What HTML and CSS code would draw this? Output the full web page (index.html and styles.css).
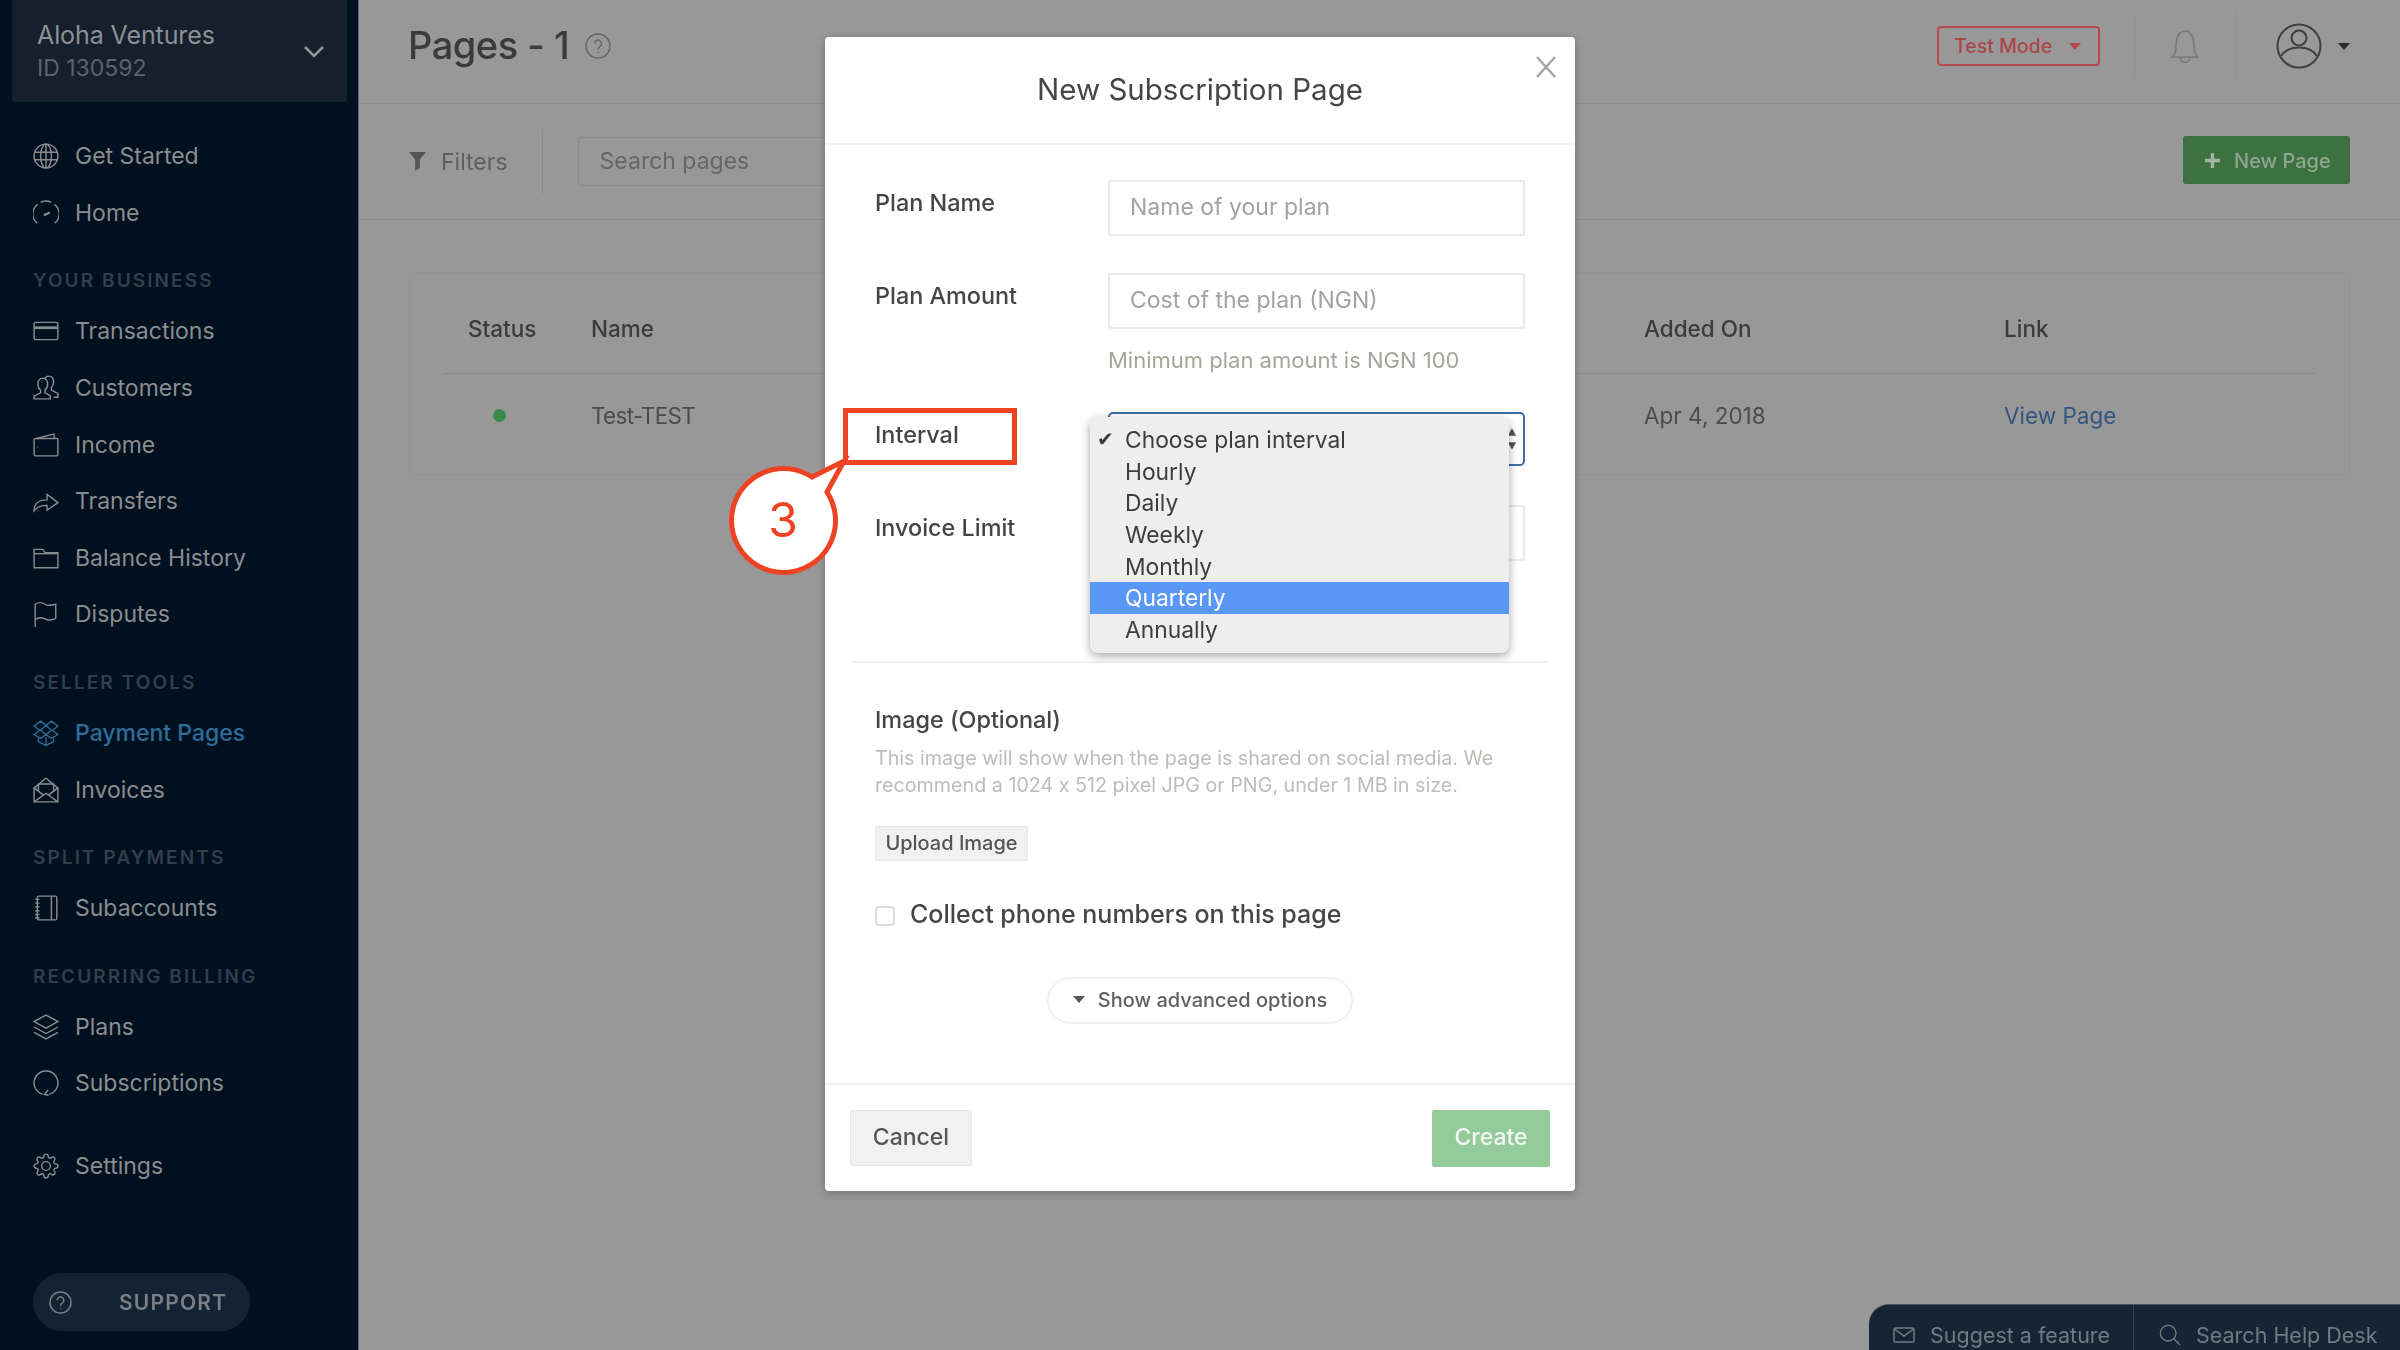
FILE: index.html
```html
<!DOCTYPE html>
<html lang="en">
<head>
<meta charset="utf-8">
<title>New Subscription Page</title>
<link rel="stylesheet" href="styles.css">
</head>
<body>
<div class="app">
  <aside class="sidebar">
    <div class="account">
      <div class="account-text">
        <div class="account-name">Aloha Ventures</div>
        <div class="account-id">ID 130592</div>
      </div>
      <svg class="account-chevron" viewBox="0 0 22 14"><path d="M2 3l9 9 9-9"/></svg>
    </div>
    <nav class="nav">
      <a class="nav-item"><svg class="ico" viewBox="0 0 24 24"><circle cx="12" cy="12" r="11"/><ellipse cx="12" cy="12" rx="5" ry="11"/><path d="M12 1v22M1.600 8.500h20.800M1.600 15.500h20.800"/></svg><span>Get Started</span></a>
      <a class="nav-item"><svg class="ico" viewBox="0 0 24 24"><path d="M4 21.500A11 11 0 0 1 4.300 4M7 2.200a11 11 0 0 1 10 0M19.700 4a11 11 0 0 1 .3 17.500"/><path class="mid" d="M10 14l5.500-2.500"/></svg><span>Home</span></a>
      <div class="nav-label">YOUR BUSINESS</div>
      <a class="nav-item"><svg class="ico" viewBox="0 0 24 24"><rect x="1" y="4" width="22" height="16" rx="1.500"/><path class="thick" d="M1 9h22"/></svg><span>Transactions</span></a>
      <a class="nav-item"><svg class="ico" viewBox="0 0 24 24"><path d="M1 22v-2.500l6-3v-2.500c-2-1.500-2.500-3.500-2.500-6 0-3 2-5 4.500-5s4.500 2 4.500 5c0 2.500-.5 4.500-2.500 6v2.500l5 2.500v3z"/><path d="M11 3c1-1.500 2.500-2 3.500-2 3 0 4.500 2 4.500 5 0 2.500-.5 4-2 5.500v2.500l6 3v3.500h-4"/></svg><span>Customers</span></a>
      <a class="nav-item"><svg class="ico" viewBox="0 0 24 24"><path d="M3 6l16-4 1 4"/><rect x="1" y="6" width="22" height="16" rx="1.500"/><path d="M4 14h.5"/></svg><span>Income</span></a>
      <a class="nav-item"><svg class="ico" viewBox="0 0 24 24"><path d="M1 21c0-6 4-10 12-10V6l10 7.500-10 7V16c-5 0-9 1-12 5z"/></svg><span>Transfers</span></a>
      <a class="nav-item"><svg class="ico" viewBox="0 0 24 24"><path d="M1 21V4h8l2 3h12v14z"/><path d="M1 8h22"/></svg><span>Balance History</span></a>
      <a class="nav-item"><svg class="ico" viewBox="0 0 24 24"><path d="M2 24V3c3-2 6-2 9 0s6 1 10 0v13c-4 2-7 2-10 .5S5 15 2 17"/></svg><span>Disputes</span></a>
      <div class="nav-label">SELLER TOOLS</div>
      <a class="nav-item is-active"><svg class="ico" viewBox="0 0 24 24"><path d="M7 1l5 4 5-4 6 4.500-5 4 5 4-6 3.500-5-3.500-5 3.500-6-3.500 5-4-5-4zM7 9.500l5-4.500 5 4.500-5 4z"/><path d="M5 17v3l7 3.500 7-3.500v-3M12 16v7.500"/></svg><span>Payment Pages</span></a>
      <a class="nav-item"><svg class="ico" viewBox="0 0 24 24"><path d="M1 10l4-3 7-6 7 6 4 3v13H1z"/><path d="M5 13V6.500h14V13M1 10l9 7M23 10l-9 7M1 23l11-8 11 8"/></svg><span>Invoices</span></a>
      <div class="nav-label">SPLIT PAYMENTS</div>
      <a class="nav-item"><svg class="ico" viewBox="0 0 24 24"><rect x="4" y="1" width="18" height="22" rx="1.500"/><path d="M17 1v22M2 4h4M2 7.500h4M2 11h4M2 14.500h4M2 18h4M2 21h4"/></svg><span>Subaccounts</span></a>
      <div class="nav-label">RECURRING BILLING</div>
      <a class="nav-item"><svg class="ico" viewBox="0 0 24 24"><path d="M12 1l11 6-11 6L1 7z"/><path d="M1 12l11 6 11-6M1 17l11 6 11-6"/></svg><span>Plans</span></a>
      <a class="nav-item"><svg class="ico" viewBox="0 0 24 24"><path d="M9 22.500A11 11 0 1 1 15 22.500"/><path d="M14 18.500l-3.500 4 4 1"/></svg><span>Subscriptions</span></a>
      <a class="nav-item nav-settings"><svg class="ico" viewBox="0 0 24 24"><circle cx="12" cy="12" r="4"/><path d="M19.400 15a1.650 1.650 0 0 0 .33 1.820l.06.06a2 2 0 0 1 0 2.830 2 2 0 0 1-2.830 0l-.06-.06a1.650 1.650 0 0 0-1.820-.33 1.650 1.650 0 0 0-1 1.510V21a2 2 0 0 1-2 2 2 2 0 0 1-2-2v-.09A1.650 1.650 0 0 0 9 19.400a1.650 1.650 0 0 0-1.820.33l-.06.06a2 2 0 0 1-2.830 0 2 2 0 0 1 0-2.830l.06-.06a1.650 1.650 0 0 0 .33-1.820 1.650 1.650 0 0 0-1.510-1H3a2 2 0 0 1-2-2 2 2 0 0 1 2-2h.09A1.650 1.650 0 0 0 4.600 9a1.650 1.650 0 0 0-.33-1.820l-.06-.06a2 2 0 0 1 0-2.830 2 2 0 0 1 2.830 0l.06.06a1.650 1.650 0 0 0 1.820.33H9a1.650 1.650 0 0 0 1-1.510V3a2 2 0 0 1 2-2 2 2 0 0 1 2 2v.09a1.650 1.650 0 0 0 1 1.510 1.650 1.650 0 0 0 1.820-.33l.06-.06a2 2 0 0 1 2.830 0 2 2 0 0 1 0 2.830l-.06.06a1.650 1.650 0 0 0-.33 1.820V9a1.650 1.650 0 0 0 1.510 1H21a2 2 0 0 1 2 2 2 2 0 0 1-2 2h-.09a1.650 1.650 0 0 0-1.510 1z"/></svg><span>Settings</span></a>
    </nav>
    <div class="support">
      <svg class="support-ico" viewBox="0 0 24 24"><circle cx="12" cy="12" r="11"/><path d="M8.500 9.500a3.500 3.500 0 1 1 5.500 3c-1.500 1-2 1.500-2 3"/><path d="M12 18v1"/></svg>
      <span>SUPPORT</span>
    </div>
  </aside>

  <main class="main">
    <header class="topbar">
      <div class="page-title">
        <h1>Pages - 1</h1>
        <svg class="help-ico" viewBox="0 0 26 26"><circle cx="13" cy="13" r="12"/><path d="M9.500 10.500a3.500 3.500 0 1 1 5.500 3c-1.500 1-2 1.500-2 3"/><path d="M13 19v1"/></svg>
      </div>
      <div class="top-actions">
        <div class="test-mode"><span>Test Mode</span><i class="caret caret-red"></i></div>
        <div class="bell-cell">
          <svg class="bell" viewBox="0 0 30 36"><path d="M2 29c3-3 4-5 4-12 0-7 3-14 9-14s9 7 9 14c0 7 1 9 4 12z"/><path d="M10 29.500a5 5 0 0 0 10 0"/></svg>
        </div>
        <div class="user-cell">
          <svg class="avatar" viewBox="0 0 46 46"><circle cx="23" cy="23" r="21.500"/><circle cx="23" cy="15" r="7.500"/><path d="M5 33c4-6 11-8.500 18-8.500s14 2.500 18 8.500"/></svg>
          <i class="caret caret-dark"></i>
        </div>
      </div>
    </header>

    <section class="toolbar">
      <div class="filters">
        <svg class="filter-ico" viewBox="0 0 18 20"><path d="M0 0h18l-6.500 8v9l-5 3V8z"/></svg>
        <span>Filters</span>
      </div>
      <div class="search">Search pages</div>
      <div class="new-page">
        <svg class="plus" viewBox="0 0 16 16"><path d="M8 0v16M0 8h16"/></svg>
        <span>New Page</span>
      </div>
    </section>

    <section class="content">
      <div class="card">
        <div class="table-row table-head">
          <div class="cell-status">Status</div><div>Name</div><div>Added On</div><div>Link</div>
        </div>
        <div class="table-row table-body">
          <div class="cell-status"><i class="dot"></i></div><div class="cell-name">Test-TEST</div><div>Apr 4, 2018</div><div class="link">View Page</div>
        </div>
      </div>
    </section>

    <div class="helpbar">
      <div class="help-cell help-suggest">
        <svg class="help-bar-ico mail" viewBox="0 0 22 16"><rect x="1" y="1" width="20" height="14" rx="1.500"/><path d="M1.500 2l9.500 7 9.500-7"/></svg>
        <span>Suggest a feature</span>
      </div>
      <div class="help-cell help-search">
        <svg class="help-bar-ico lens" viewBox="0 0 24 24"><circle cx="10" cy="10" r="8.500"/><path d="M16 16l7 7"/></svg>
        <span>Search Help Desk</span>
      </div>
    </div>
  </main>
</div>

<div class="modal">
  <div class="modal-head">
    <h2>New Subscription Page</h2>
    <svg class="close" viewBox="0 0 20 22"><path d="M1 1l18 20M19 1L1 21"/></svg>
  </div>
  <div class="modal-body">
    <div class="field">
      <label class="field-label">Plan Name</label>
      <input class="input" placeholder="Name of your plan">
    </div>
    <div class="field field-tight">
      <label class="field-label">Plan Amount</label>
      <input class="input" placeholder="Cost of the plan (NGN)">
    </div>
    <div class="hint">Minimum plan amount is NGN 100</div>
    <div class="field field-select">
      <label class="field-label">Interval</label>
      <div class="select"><svg class="select-arrows" viewBox="0 0 12 26"><path d="M6 0l5 9H1zM6 26l-5-9h10z"/></svg></div>
    </div>
    <div class="field">
      <label class="field-label">Invoice Limit</label>
      <input class="input">
    </div>
    <div class="divider"></div>
    <div class="image-title">Image (Optional)</div>
    <p class="image-desc">This image will show when the page is shared on social media. We<br>recommend a 1024 x 512 pixel JPG or PNG, under 1 MB in size.</p>
    <div class="upload">Upload Image</div>
    <label class="phone"><i class="checkbox"></i><span>Collect phone numbers on this page</span></label>
    <div class="advanced"><i class="caret caret-small"></i><span>Show advanced options</span></div>
  </div>
  <div class="modal-foot">
    <div class="btn-cancel">Cancel</div>
    <div class="btn-create">Create</div>
  </div>
</div>

<ul class="dropdown">
  <li class="is-checked">Choose plan interval</li>
  <li>Hourly</li>
  <li>Daily</li>
  <li>Weekly</li>
  <li>Monthly</li>
  <li class="is-hover">Quarterly</li>
  <li>Annually</li>
</ul>

<div class="callout-box"></div>
<svg class="callout" viewBox="0 0 125 172">
  <path d="M87 72L119 56 102 87A52 52 0 1 1 87 72Z"/>
  <text x="58" y="132">3</text>
</svg>
</body>
</html>
```
FILE: styles.css
```css
* { box-sizing: border-box; }
html, body { margin: 0; height: 100%; }
body {
  width: 2400px;
  height: 1350px;
  overflow: hidden;
  position: relative;
  background: #989898;
  font-family: Inter, "Liberation Sans", sans-serif;
  font-feature-settings: "calt" 0;
  filter: blur(.5px);
}
.app { display: flex; height: 1350px; }

/* Sidebar */
.sidebar {
  width: 359px;
  flex: none;
  display: flex;
  flex-direction: column;
  background: #01101f;
  border-right: 1px solid #5a6672;
}
.account {
  margin: 0 11px 0 12px;
  height: 102px;
  background: #161f2c;
  border-radius: 0 0 4px 4px;
  display: flex;
  align-items: center;
  justify-content: space-between;
  padding: 0 22px 0 25px;
}
.account-text { margin-top: -2px; }
.account-name { font-size: 25px; line-height: 34px; color: #8b9096; margin-bottom: 1px; letter-spacing: -.1px; }
.account-id { font-size: 23px; line-height: 30px; color: #5b626b; }
.account-chevron { width: 22px; height: 14px; fill: none; stroke: #92979c; stroke-width: 2.500; }
.nav { margin-top: 26px; display: flex; flex-direction: column; }
.nav-item {
  height: 56.600px;
  flex: none;
  display: flex;
  align-items: center;
  gap: 16px;
  padding-left: 33px;
  font-size: 23px;
  color: #8a8d90;
}
.nav-item.is-active { color: #2d6c97; font-weight: 500; }
.nav-settings { margin-top: 26px; }
.ico { width: 26px; height: 26px; flex: none; fill: none; stroke: currentColor; stroke-width: 1.300; }
.ico .thick { stroke-width: 2.500; }
.ico .mid { stroke-width: 2; }
.nav-label {
  padding: 30px 0 12px 33px;
  font-size: 19px;
  line-height: 20px;
  font-weight: 600;
  letter-spacing: 2.100px;
  color: #333e4c;
}
.support {
  margin: auto 0 19px 33px;
  width: 217px;
  height: 58px;
  flex: none;
  border-radius: 29px;
  background: #142333;
  display: flex;
  align-items: center;
  color: #7b7f84;
  font-size: 21px;
  font-weight: 600;
  letter-spacing: 1.200px;
  padding-left: 16px;
}
.support-ico { width: 23px; height: 23px; fill: none; stroke: currentColor; stroke-width: 1.500; margin-right: 47px; }

/* Main */
.main { flex: 1; display: flex; flex-direction: column; min-width: 0; color: #3d3d3b; }
.topbar {
  height: 104px;
  flex: none;
  display: flex;
  justify-content: space-between;
  align-items: flex-start;
  padding: 13px 50px 0 49px;
  border-bottom: 1px solid #8f8f8f;
}
.page-title { height: 66px; display: flex; align-items: center; gap: 16px; }
.page-title h1 { margin: 0 0 2px; font-size: 38px; font-weight: 500; color: #3b3b39; letter-spacing: -.5px; }
.help-ico { width: 26px; height: 26px; fill: none; stroke: #666663; stroke-width: 1.500; }
.top-actions { display: flex; align-items: center; height: 66px; }
.test-mode {
  width: 163px;
  height: 40px;
  margin-right: 34px;
  border: 2px solid #b54a4c;
  border-radius: 4px;
  display: flex;
  align-items: center;
  justify-content: space-between;
  padding: 0 17px 0 15px;
  color: #ad4548;
  font-size: 19.500px;
  font-weight: 500;
}
.caret { display: block; width: 0; height: 0; border-style: solid; border-color: currentColor transparent transparent; }
.caret-red { border-width: 7px 6.500px 0; color: #b8474a; }
.caret-dark { border-width: 7px 6.500px 0; color: #2b2b2b; margin-left: 16px; }
.caret-small { border-width: 7px 6px 0; color: #555; }
.bell-cell {
  width: 102px;
  height: 66px;
  border-left: 1px solid #909090;
  border-right: 1px solid #909090;
  display: flex;
  align-items: center;
  justify-content: center;
}
.bell { width: 30px; height: 36px; fill: none; stroke: #787878; stroke-width: 1.500; }
.user-cell { display: flex; align-items: center; padding-left: 40px; }
.avatar { width: 46px; height: 46px; fill: none; stroke: #3f3f3f; stroke-width: 2; }

.toolbar {
  height: 116px;
  flex: none;
  display: flex;
  align-items: center;
  padding: 0 50px;
  border-bottom: 1px solid #8f8f8f;
}
.filters {
  display: flex;
  align-items: center;
  gap: 15px;
  height: 65px;
  padding-right: 34px;
  border-right: 1px solid #8a8a8a;
  font-size: 23px;
  color: #5f5f5b;
}
.filter-ico { width: 17px; height: 19px; fill: #555552; }
.search {
  margin-left: 35px;
  width: 500px;
  height: 49px;
  border: 1px solid #8a8a8a;
  border-radius: 3px;
  padding-left: 21px;
  line-height: 47px;
  font-size: 23px;
  color: #666664;
}
.new-page {
  margin: 0 0 4px auto;
  width: 167px;
  height: 48px;
  background: #3e7140;
  border-radius: 3px;
  display: flex;
  align-items: center;
  gap: 14px;
  padding: 2px 0 0 22px;
  font-size: 20px;
  color: #8fa792;
  font-weight: 500;
}
.plus { width: 15px; height: 15px; fill: none; stroke: #a2b5a3; stroke-width: 3.500; }

.content { padding: 52px 50px 0; }
.card { height: 203px; border: 1px solid #939393; border-radius: 3px; padding: 0 33px; }
.table-row {
  display: grid;
  grid-template-columns: 148px 1053px 360px 1fr;
  align-items: center;
  font-size: 22.500px;
}
.table-head { height: 101px; padding-top: 10px; border-bottom: 1px solid #8c8c8c; font-weight: 500; color: #3c3c3a; }
.table-body { height: 82px; color: #4c4c4a; }
.cell-status { padding-left: 25px; }
.cell-name { letter-spacing: -.7px; }
.dot { display: block; width: 13px; height: 13px; border-radius: 50%; background: #3e8a4a; margin-left: 25px; }
.link { color: #33557f; }

.helpbar {
  margin: auto 0 0 auto;
  width: 531px;
  height: 46px;
  flex: none;
  display: flex;
  background: #152536;
  border-top: 1px solid #4a5560;
  border-top-left-radius: 20px;
  overflow: hidden;
  color: #737980;
  font-size: 21.500px;
}
.help-cell { display: flex; align-items: flex-start; padding-top: 15px; line-height: 30px; white-space: nowrap; }
.help-suggest { width: 265px; padding-left: 24px; gap: 15px; border-right: 1px solid #35444f; }
.help-search { flex: 1; padding-left: 25px; gap: 15px; }
.help-bar-ico { fill: none; stroke: #737980; stroke-width: 1.500; flex: none; }
.mail { width: 22px; height: 16px; margin-top: 7px; }
.lens { width: 22px; height: 22px; margin-top: 4px; }

/* Modal */
.modal {
  position: absolute;
  left: 825px;
  top: 37px;
  width: 750px;
  height: 1154px;
  background: #fff;
  border-radius: 4px;
  box-shadow: 0 2px 8px rgba(0, 0, 0, .25);
  display: flex;
  flex-direction: column;
  color: #4a4a48;
}
.modal-head {
  height: 108px;
  flex: none;
  position: relative;
  border-bottom: 2px solid #f1f1f1;
  display: flex;
  align-items: center;
  justify-content: center;
}
.modal-head h2 { margin: -2px 0 0; font-size: 29.500px; font-weight: 400; color: #464644; }
.close { position: absolute; right: 19px; top: 19px; width: 20px; height: 22px; fill: none; stroke: #a6a6a6; stroke-width: 2.500; }
.modal-body { flex: 1; padding-top: 35px; }
.field { display: grid; grid-template-columns: 233px 417px; padding-left: 50px; margin-bottom: 37px; }
.field-tight { margin-bottom: 16px; }
.field-select { margin-bottom: 39px; }
.field-label { padding-top: 8px; font-size: 23.400px; line-height: 30px; font-weight: 500; color: #454543; }
.input {
  height: 56px;
  width: 417px;
  border: 2px solid #e6eaed;
  border-radius: 3px;
  padding: 0 20px 3px;
  font: 400 23px Inter, "Liberation Sans", sans-serif;
  background: #fff;
  outline: none;
}
.input::placeholder { color: #a2a2a0; opacity: 1; }
.hint { margin: 0 0 37px 283px; font-size: 22px; line-height: 30px; color: #a5a59c; }
.select { height: 54px; width: 417px; border: 2px solid #3b6ea8; border-radius: 5px; position: relative; }
.select-arrows { position: absolute; right: 6px; top: 12px; width: 10px; height: 26px; fill: #555; }
.divider { height: 2px; margin: 100px 27px 0; background: #f1f1f1; }
.image-title { margin: 42px 0 0 50px; font-size: 23.400px; line-height: 30px; font-weight: 500; color: #454543; }
.image-desc { margin: 10px 0 0 50px; font-size: 19.700px; line-height: 27px; color: #bcbcb8; }
.upload {
  margin: 27px 0 0 50px;
  width: 153px;
  height: 35px;
  background: #f1f1f1;
  border: 1px solid #e8e8e8;
  border-radius: 2px;
  text-align: center;
  line-height: 32px;
  font-size: 20px;
  font-weight: 500;
  color: #555553;
}
.phone {
  margin: 38px 0 0 50px;
  height: 30px;
  display: flex;
  align-items: center;
  gap: 15px;
  font-size: 25px;
  font-weight: 500;
  color: #454543;
}
.checkbox { width: 20px; height: 20px; margin-top: 3px; border: 2px solid #dcdcdc; border-radius: 4px; background: #fff; }
.advanced {
  margin: 48px auto 0;
  width: 306px;
  height: 47px;
  border: 2px solid #f0f0f0;
  border-radius: 24px;
  display: flex;
  align-items: center;
  justify-content: center;
  gap: 13px;
  padding-bottom: 2px;
  font-size: 20px;
  font-weight: 500;
  color: #60605e;
}
.modal-foot {
  height: 108px;
  flex: none;
  border-top: 2px solid #f1f1f1;
  padding: 25px 25px 0;
  display: flex;
  justify-content: space-between;
  align-items: flex-start;
}
.btn-cancel {
  width: 122px;
  height: 56px;
  background: #f1f1f1;
  border: 1px solid #e8e8e8;
  border-radius: 2px;
  text-align: center;
  line-height: 52px;
  font-size: 23px;
  font-weight: 500;
  color: #555553;
}
.btn-create {
  width: 118px;
  height: 57px;
  background: #95cb9b;
  border-radius: 2px;
  text-align: center;
  line-height: 54px;
  font-size: 23px;
  font-weight: 500;
  color: #f2f8f2;
}

/* Native-looking dropdown menu */
.dropdown {
  position: absolute;
  left: 1090px;
  top: 417px;
  width: 419px;
  height: 236px;
  margin: 0;
  padding: 7px 0 0;
  list-style: none;
  background: #eeeeee;
  border-radius: 8px;
  box-shadow: 0 3px 10px rgba(0, 0, 0, .35);
  font-size: 22.800px;
  color: #3d3d3d;
}
.dropdown li { height: 31.700px; line-height: 31.700px; padding-left: 35px; position: relative; }
.is-checked::before { content: "\2714"; position: absolute; left: 7px; font: 400 20px "DejaVu Sans", sans-serif; line-height: 31.700px; }
.is-hover { background: #5998f6; color: #fff; }

/* Annotation */
.callout-box { position: absolute; left: 843px; top: 408px; width: 174px; height: 57px; border: 5px solid #ee4323; }
.callout { position: absolute; left: 725px; top: 405px; width: 125px; height: 172px; overflow: visible; }
.callout path { fill: #fff; stroke: #ee4323; stroke-width: 5; }
.callout text { font: 400 48px Inter, "Liberation Sans", sans-serif; fill: #ee4323; text-anchor: middle; }
```
